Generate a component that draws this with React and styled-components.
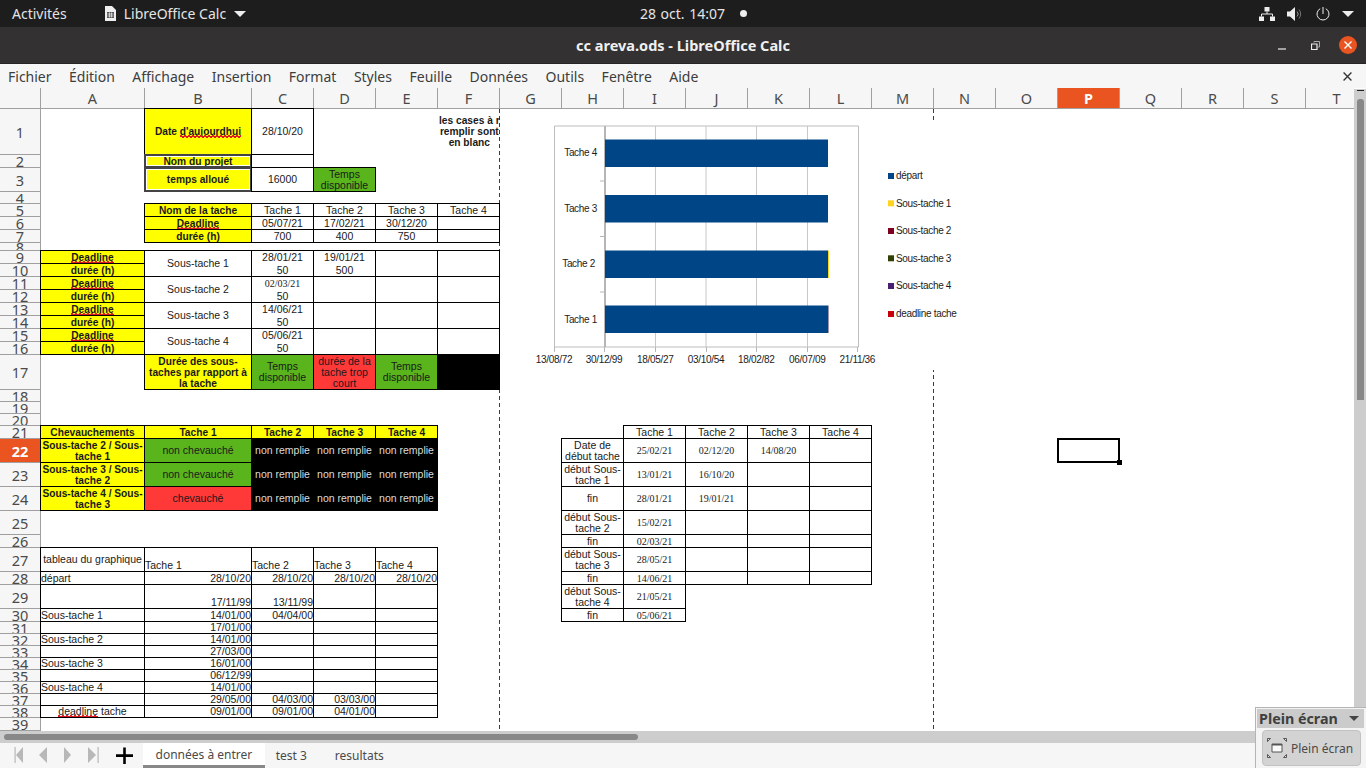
import React from 'react';
import styled, { createGlobalStyle, css } from 'styled-components';

const GlobalStyle = createGlobalStyle`
  * { box-sizing: border-box; }
  html, body { margin: 0; padding: 0; background: #fff; }
  body { font-family: "Noto Sans", sans-serif; }
`;

const LETTERS = 'ABCDEFGHIJKLMNOPQRST'.split('');
const ROW_HEIGHTS = [
  46, 13, 24, 12, 13, 13, 13, 8, 13, 13, 13, 13, 13, 13, 13, 13, 35, 12, 12, 12,
  13, 24, 24, 24, 24, 13, 24, 13, 24, 13, 12, 12, 12, 12, 12, 12, 12, 12, 13,
];
const colIndex = (l) => LETTERS.indexOf(l) + 2;

const Window = styled.div`
  position: relative;
  width: 1366px;
  height: 768px;
  display: flex;
  flex-direction: column;
  overflow: hidden;
  background: #fff;
`;

/* ---- gnome top bar ---- */
const TopBar = styled.header`
  height: 27px;
  flex: none;
  display: grid;
  grid-template-columns: 1fr auto 1fr;
  align-items: center;
  background: #1d1d1d;
  color: #e4e4e4;
  font-size: 14px;
  padding: 0 12px;
`;
const TopLeft = styled.div`
  display: flex;
  align-items: center;
`;
const AppMenu = styled.div`
  display: flex;
  align-items: center;
  gap: 8px;
  margin-left: 37px;
`;
const Clock = styled.div`
  display: flex;
  align-items: center;
  gap: 15px;
  word-spacing: 1px;
  margin-left: 21px;
`;
const Dot = styled.span`
  width: 7px;
  height: 7px;
  border-radius: 50%;
  background: #eee;
`;
const Tray = styled.div`
  display: flex;
  align-items: center;
  justify-content: flex-end;
  gap: 12.5px;
`;

/* ---- title bar ---- */
const TitleBar = styled.div`
  height: 37px;
  flex: none;
  display: flex;
  align-items: center;
  justify-content: center;
  position: relative;
  background: #333132;
  border-bottom: 1px solid #262626;
  color: #f0f0f0;
  font-size: 14.5px;
  font-weight: 700;
`;
const WindowButtons = styled.div`
  position: absolute;
  right: 9px;
  top: 9px;
  display: flex;
  align-items: center;
  gap: 15px;
`;
const WinBtn = styled.span`
  width: 18px;
  height: 18px;
  display: flex;
  align-items: center;
  justify-content: center;
`;
const CloseBtn = styled(WinBtn)`
  border-radius: 50%;
  background: #e95420;
`;

/* ---- menu bar ---- */
const MenuBar = styled.nav`
  height: 24px;
  flex: none;
  display: flex;
  align-items: center;
  gap: 17.5px;
  padding: 0 14px 0 8px;
  background: #f6f6f6;
  color: #3d3d3d;
  font-size: 14px;
`;
const MenuClose = styled.span`
  margin-left: auto;
  display: flex;
`;

/* ---- sheet ---- */
const Workspace = styled.div`
  flex: 1;
  min-height: 0;
  display: flex;
`;
const SheetView = styled.div`
  position: relative;
  flex: 1;
  min-width: 0;
  overflow: hidden;
`;
const Sheet = styled.div`
  display: grid;
  grid-template-columns: 41px 104px 107px repeat(18, 62px);
  grid-template-rows: 21px ${ROW_HEIGHTS.map((h) => `${h}px`).join(' ')};
`;
const Corner = styled.div`
  grid-column: 1;
  grid-row: 1;
  background: #f6f6f6;
  border-right: 1px solid #a0a0a0;
  border-bottom: 1px solid #a0a0a0;
`;
const headActive = css`
  background: #e95420;
  color: #fff;
  font-weight: 700;
`;
const ColHead = styled.div`
  grid-column: ${(p) => colIndex(p.$col)};
  grid-row: 1;
  display: flex;
  align-items: center;
  justify-content: center;
  background: #f6f6f6;
  color: #4a4a4a;
  font-size: 14.5px;
  border-right: 1px solid #a0a0a0;
  border-bottom: 1px solid #a0a0a0;
  ${(p) => p.$active && headActive}
`;
const RowHead = styled.div`
  grid-column: 1;
  grid-row: ${(p) => p.$row + 1};
  display: flex;
  align-items: center;
  justify-content: center;
  overflow: hidden;
  background: #f6f6f6;
  color: #4a4a4a;
  font-size: 14.5px;
  line-height: 12px;
  border-right: 1px solid #a0a0a0;
  border-bottom: 1px solid #a0a0a0;
  ${(p) => p.$active && headActive}
`;
const PageBreak = styled.div`
  grid-column: ${(p) => colIndex(p.$col)};
  grid-row: 2 / -1;
  width: 1px;
  margin-left: -1px;
  background: repeating-linear-gradient(#3c3c3c 0 4px, transparent 4px 7px);
`;

const Cell = styled.div`
  grid-column: ${(p) => colIndex(p.$col)} / span ${(p) => p.$cols || 1};
  grid-row: ${(p) => p.$row + 1} / span ${(p) => p.$rows || 1};
  display: flex;
  align-items: ${(p) => (p.$valign === 'bottom' ? 'flex-end' : 'center')};
  justify-content: ${(p) =>
    p.$align === 'left' ? 'flex-start' : p.$align === 'right' ? 'flex-end' : 'center'};
  text-align: ${(p) => p.$align || 'center'};
  overflow: hidden;
  white-space: nowrap;
  font-family: ${(p) => (p.$serif ? '"Liberation Serif"' : '"Liberation Sans"')}, sans-serif;
  font-size: ${(p) => (p.$serif ? 10 : 10.5)}px;
  line-height: ${(p) => p.$lh || 11}px;
  color: #1a1a1a;
`;
const Box = styled(Cell)`
  border: 1px solid #000;
  margin: -1px 0 0 -1px;
`;
const Yellow = styled(Box)`
  background: #ffff00;
  font-size: 10.2px;
  font-weight: 700;
`;
const Framed = styled(Yellow)`
  border: 2px solid #444;
  box-shadow: inset 0 0 0 1px #fff;
`;
const Green = styled(Box)`
  background: #5ab41c;
`;
const Red = styled(Box)`
  background: #ff3838;
`;
const Black = styled(Box)`
  background: #000;
  color: #dcdcdc;
`;
const Note = styled(Cell)`
  font-size: 10.2px;
  font-weight: 700;
  justify-content: flex-start;
  align-items: flex-start;
  padding: 6px 0 0 1px;
  text-align: center;
`;
const Selected = styled(Cell)`
  position: relative;
  overflow: visible;
  border: 2px solid #000;
  margin: -1px 0 0 -1px;
`;
const Handle = styled.span`
  position: absolute;
  right: -4px;
  bottom: -4px;
  width: 5px;
  height: 5px;
  background: #000;
`;
/* red squiggle of the spell checker, sits just under the baseline */
const Spell = styled.span`
  position: relative;
  &::after {
    content: '';
    position: absolute;
    left: 0;
    right: 0;
    bottom: -1px;
    height: 3px;
    background-image:
      linear-gradient(45deg, transparent 38%, #e01b24 38%, #e01b24 62%, transparent 62%),
      linear-gradient(-45deg, transparent 38%, #e01b24 38%, #e01b24 62%, transparent 62%);
    background-size: 4px 3px;
    background-position: 0 0, 2px 0;
  }
`;
const SerifLine = styled.span`
  font-family: "Liberation Serif", serif;
  font-size: 10px;
`;
const ChartFloat = styled.svg`
  position: absolute;
  left: 530px;
  top: 32px;
  background: #fff;
`;

/* ---- scrollbars ---- */
const VScroll = styled.div`
  position: relative;
  width: 12px;
  flex: none;
  margin-top: 1px;
  background: #cdcdcd;
`;
const VEnd = styled.span`
  position: absolute;
  left: 3px;
  top: 1px;
  width: 7px;
  height: 1px;
  background: #222;
`;
const VThumb = styled.span`
  position: absolute;
  left: 3px;
  top: 10px;
  width: 7px;
  height: 301px;
  border-radius: 3px 3px 0 0;
  background: #888;
`;
const HScroll = styled.div`
  height: 12px;
  flex: none;
  padding: 3px 0 3px 4px;
  background: #cdcdcd;
`;
const HThumb = styled.div`
  width: 634px;
  height: 6px;
  border-radius: 3px;
  background: #888;
`;

/* ---- sheet tabs ---- */
const TabBar = styled.div`
  height: 25px;
  flex: none;
  display: flex;
  align-items: stretch;
  background: #f6f6f6;
  color: #4a4a4a;
  font-size: 12px;
`;
const TabNav = styled.div`
  width: 143px;
  flex: none;
  display: flex;
  align-items: center;
`;
const Tab = styled.div`
  display: flex;
  align-items: center;
  padding: 0 11px;
  margin-right: 6px;
  ${(p) =>
    p.$active &&
    css`
      background: #fff;
      border-bottom: 3px solid #888;
      padding: 1px 12.5px 0;
      margin-right: 0;
    `}
`;

/* ---- floating toolbar ---- */
const FloatPanel = styled.div`
  position: absolute;
  right: 0;
  bottom: 0;
  width: 111px;
  height: 61px;
  padding: 1px 2px 2px 1px;
  background: #f4f4f4;
  border: 1px solid #b4b4b4;
  border-right: 0;
  border-bottom: 0;
`;
const FloatHead = styled.div`
  height: 19px;
  display: flex;
  align-items: center;
  justify-content: space-between;
  padding: 0 5px 0 2px;
  background: #cbcbcb;
  color: #3f3f3f;
  font-size: 14.3px;
  font-weight: 700;
  white-space: nowrap;
`;
const FloatButton = styled.div`
  height: 36px;
  margin: 2px 0 0 5px;
  width: 99px;
  display: flex;
  align-items: center;
  gap: 4px;
  padding-left: 4px;
  background: #d3d3d3;
  border: 1px solid #c2c2c2;
  border-radius: 4px;
  color: #4a4a4a;
  font-size: 12px;
  white-space: nowrap;
`;

const DocIcon = () => (
  <svg width="12" height="15" viewBox="0 0 12 15">
    <path d="M1 0h7l4 4v11H1z" fill="#eee" />
    <path d="M3 6h7v6H3z" fill="#555" />
    <path d="M3.5 8h6M3.5 10h6M5.5 6.5v5M7.5 6.5v5" stroke="#eee" strokeWidth=".7" />
  </svg>
);
const Caret = ({ w = 12, h = 6, color = '#eee' }) => (
  <svg width={w} height={h} viewBox="0 0 11 6" preserveAspectRatio="none">
    <path d="M0 0h11L5.5 6z" fill={color} />
  </svg>
);
const NetworkIcon = () => (
  <svg width="16" height="14" viewBox="0 0 16 14">
    <path d="M5.5 0h5v4.500h-5zM0 9.5h5V14H0zM11 9.5h5V14h-5z" fill="#eee" />
    <path d="M8 4.5v2.5M2.5 9.5V7h11v2.5" stroke="#eee" fill="none" />
  </svg>
);
const VolumeIcon = () => (
  <svg width="16" height="14" viewBox="0 0 16 14">
    <path d="M0 4.5h3L8 0v14l-5-4.500H0z" fill="#eee" />
    <path d="M10 4.5a3.5 3.5 0 0 1 0 5" stroke="#999" fill="none" />
    <path d="M12 2.5a7 7 0 0 1 0 9" stroke="#777" fill="none" />
  </svg>
);
const PowerIcon = () => (
  <svg width="14" height="14" viewBox="0 0 14 14">
    <path d="M4.2 1.7a6 6 0 1 0 5.6 0" stroke="#eee" fill="none" />
    <path d="M7 0v7" stroke="#eee" />
  </svg>
);
const MinIcon = () => (
  <svg width="9" height="9" viewBox="0 0 9 9">
    <path d="M0 8h8" stroke="#eee" strokeWidth="1.2" />
  </svg>
);
const RestoreIcon = () => (
  <svg width="9" height="9" viewBox="0 0 9 9">
    <path d="M.5 3h5.5v5.5H.5z" stroke="#eee" fill="none" strokeWidth="1.2" />
    <path d="M3 1.5V.5h5.5V6H7" stroke="#aaa" fill="none" />
  </svg>
);
const CrossIcon = ({ size = 8, color = '#fff', width = 1.4 }) => (
  <svg width={size} height={size} viewBox="0 0 8 8">
    <path d="M.5.5l7 7M7.5.5l-7 7" stroke={color} strokeWidth={width} />
  </svg>
);
const TabArrows = () => (
  <svg width="143" height="25" viewBox="0 0 143 25">
    <g fill="#b8b8b8">
      <path d="M14.5 4h1.2v16h-1.2zM23 4v16l-7-8z" />
      <path d="M47 4v16l-8-8z" />
      <path d="M64 4v16l7-8z" />
      <path d="M88 4v16l8-8zM97.5 4h1.2v16h-1.2z" />
    </g>
    <path d="M116 12.6h17M124.5 4.5v16.5" stroke="#000" strokeWidth="2.6" />
  </svg>
);
const FullScreenIcon = () => (
  <svg width="20" height="20" viewBox="0 0 20 20">
    <path d="M5 6h10v8H5z" fill="#fafafa" stroke="#555" />
    <path d="M5 6h10v1.5H5z" fill="#555" />
    <g stroke="#555" fill="#eee">
      <path d="M.5 3.5V.5h3zM16.5.5h3v3zM.5 16.5v3h3zM19.5 16.5v3h-3z" />
    </g>
  </svg>
);

const BARS = [139.5, 195, 250.5, 305.5];
const GRID_X = [655.5, 706, 756.5, 807.5];
const DATE_TICKS = [
  [554, '13/08/72'], [604, '30/12/99'], [655.3, '18/05/27'], [706, '03/10/54'],
  [756.3, '18/02/82'], [807.3, '06/07/09'], [857.3, '21/11/36'],
];
const LEGEND = [
  [176, '#004586', 'départ'], [203.3, '#ffd320', 'Sous-tache 1'], [231, '#7e0021', 'Sous-tache 2'],
  [258.3, '#314004', 'Sous-tache 3'], [286, '#4b1f6f', 'Sous-tache 4'], [314, '#c5000b', 'deadline tache'],
];
const Y_LABELS = [
  [597, 155.5, 'Tache 4'], [597, 211.5, 'Tache 3'], [595, 266.5, 'Tache 2'], [597, 322.5, 'Tache 1'],
];

const Chart = () => (
  <ChartFloat width="436" height="250" viewBox="530 120 436 250">
    <g fontFamily="Liberation Sans, sans-serif" fontSize="10" letterSpacing="-0.32" fill="#1c1c1c">
      <path d="M554.5 126H858.5V347H554.5z" fill="none" stroke="#bdbdbd" />
      {GRID_X.map((x) => (
        <path key={x} d={`M${x} 126V347`} stroke="#c8c8c8" />
      ))}
      <path d="M605 126V347" stroke="#b6b6b6" strokeWidth="2" />
      {BARS.map((y) => (
        <rect key={y} x="605" y={y} width="223" height="27.5" fill="#004586" />
      ))}
      <path d="M828.5 250.5v27.5" stroke="#ffd320" />
      <path d="M828.5 305.5v27.5" stroke="#a294ac" />
      <path d="M600 181h5M600 236.5h5M600 292h5" stroke="#b6b6b6" />
      {DATE_TICKS.map(([x, label]) => (
        <g key={label}>
          <path d={`M${Math.round(x) + 0.5} 347v5`} stroke="#b6b6b6" />
          <text x={x} y="362.5" textAnchor="middle">{label}</text>
        </g>
      ))}
      {Y_LABELS.map(([x, y, label]) => (
        <text key={label} x={x} y={y} textAnchor="end">{label}</text>
      ))}
      {LEGEND.map(([y, color, label]) => (
        <g key={label}>
          <rect x="888" y={y - 3} width="6" height="6" fill={color} />
          <text x="896" y={y + 3.3}>{label}</text>
        </g>
      ))}
    </g>
  </ChartFloat>
);

const TACHES = ['Tache 1', 'Tache 2', 'Tache 3', 'Tache 4'];
const SUB_ROWS = [
  { row: 9, name: 'Sous-tache 1', c: <>28/01/21<br />50</>, d: <>19/01/21<br />500</> },
  { row: 11, name: 'Sous-tache 2', c: <span><SerifLine>02/03/21</SerifLine><br />50</span> },
  { row: 13, name: 'Sous-tache 3', c: <>14/06/21<br />50</> },
  { row: 15, name: 'Sous-tache 4', c: <>05/06/21<br />50</> },
];
const OVERLAPS = [
  { row: 22, label: <>Sous-tache 2 / Sous-<br />tache 1</>, Kind: Green, text: 'non chevauché' },
  { row: 23, label: <>Sous-tache 3 / Sous-<br />tache 2</>, Kind: Green, text: 'non chevauché' },
  { row: 24, label: <>Sous-tache 4 / Sous-<br />tache 3</>, Kind: Red, text: 'chevauché' },
];
const GRAPH_ROWS = [
  [28, 'départ', '28/10/20', '28/10/20', '28/10/20', '28/10/20'],
  [29, '', '17/11/99', '13/11/99', '', ''],
  [30, 'Sous-tache 1', '14/01/00', '04/04/00', '', ''],
  [31, '', '17/01/00', '', '', ''],
  [32, 'Sous-tache 2', '14/01/00', '', '', ''],
  [33, '', '27/03/00', '', '', ''],
  [34, 'Sous-tache 3', '16/01/00', '', '', ''],
  [35, '', '06/12/99', '', '', ''],
  [36, 'Sous-tache 4', '14/01/00', '', '', ''],
  [37, '', '29/05/00', '04/03/00', '03/03/00', ''],
];
const DATES_TABLE = [
  [22, <>Date de<br />début tache</>, '25/02/21', '02/12/20', '14/08/20', ''],
  [23, <>début Sous-<br />tache 1</>, '13/01/21', '16/10/20', '', ''],
  [24, 'fin', '28/01/21', '19/01/21', '', ''],
  [25, <>début Sous-<br />tache 2</>, '15/02/21', '', '', ''],
  [26, 'fin', '02/03/21', '', '', ''],
  [27, <>début Sous-<br />tache 3</>, '28/05/21', '', '', ''],
  [28, 'fin', '14/06/21', '', '', ''],
];

const TopSection = () => (
  <>
    <Yellow $col="B" $row={1}><span>Date <Spell>d'aujourdhui</Spell></span></Yellow>
    <Box $col="C" $row={1}>28/10/20</Box>
    <Note $col="F" $row={1}>les cases à r<br />remplir sont<br />en blanc</Note>
    <Framed $col="B" $row={2}>Nom du projet</Framed>
    <Box $col="C" $row={2} />
    <Framed $col="B" $row={3}>temps alloué</Framed>
    <Box $col="C" $row={3}>16000</Box>
    <Green $col="D" $row={3}>Temps<br />disponible</Green>

    <Yellow $col="B" $row={5}>Nom de la tache</Yellow>
    {TACHES.map((t, i) => (
      <Box key={t} $col={'CDEF'[i]} $row={5}>{t}</Box>
    ))}
    <Yellow $col="B" $row={6}><Spell>Deadline</Spell></Yellow>
    <Box $col="C" $row={6}>05/07/21</Box>
    <Box $col="D" $row={6}>17/02/21</Box>
    <Box $col="E" $row={6}>30/12/20</Box>
    <Box $col="F" $row={6} />
    <Yellow $col="B" $row={7}>durée (h)</Yellow>
    <Box $col="C" $row={7}>700</Box>
    <Box $col="D" $row={7}>400</Box>
    <Box $col="E" $row={7}>750</Box>
    <Box $col="F" $row={7} />

    {SUB_ROWS.map(({ row, name, c, d }) => (
      <React.Fragment key={row}>
        <Yellow $col="A" $row={row}><Spell>Deadline</Spell></Yellow>
        <Yellow $col="A" $row={row + 1}>durée (h)</Yellow>
        <Box $col="B" $row={row} $rows={2}>{name}</Box>
        <Box $col="C" $row={row} $rows={2} $lh={13}>{c}</Box>
        <Box $col="D" $row={row} $rows={2} $lh={13}>{d}</Box>
        <Box $col="E" $row={row} $rows={2} />
        <Box $col="F" $row={row} $rows={2} />
      </React.Fragment>
    ))}

    <Yellow $col="B" $row={17}>Durée des sous-<br />taches par rapport à<br />la tache</Yellow>
    <Green $col="C" $row={17}>Temps<br />disponible</Green>
    <Red $col="D" $row={17}>durée de la<br />tache trop<br />court</Red>
    <Green $col="E" $row={17}>Temps<br />disponible</Green>
    <Black $col="F" $row={17} />
  </>
);

const OverlapSection = () => (
  <>
    <Yellow $col="A" $row={21}>Chevauchements</Yellow>
    {TACHES.map((t, i) => (
      <Yellow key={t} $col={'BCDE'[i]} $row={21}>{t}</Yellow>
    ))}
    {OVERLAPS.map(({ row, label, Kind, text }) => (
      <React.Fragment key={row}>
        <Yellow $col="A" $row={row}>{label}</Yellow>
        <Kind $col="B" $row={row}>{text}</Kind>
        <Black $col="C" $row={row}>non remplie</Black>
        <Black $col="D" $row={row}>non remplie</Black>
        <Black $col="E" $row={row}>non remplie</Black>
      </React.Fragment>
    ))}
  </>
);

const GraphSection = () => (
  <>
    <Box $col="A" $row={27}>tableau du graphique</Box>
    {TACHES.map((t, i) => (
      <Box key={t} $col={'BCDE'[i]} $row={27} $align="left" $valign="bottom">{t}</Box>
    ))}
    {GRAPH_ROWS.map(([row, label, ...dates]) => (
      <React.Fragment key={row}>
        <Box $col="A" $row={row} $align="left">{label}</Box>
        {dates.map((d, i) => (
          <Box key={i} $col={'BCDE'[i]} $row={row} $align="right" $valign={row === 29 ? 'bottom' : undefined}>{d}</Box>
        ))}
      </React.Fragment>
    ))}
    <Box $col="A" $row={38}><span><Spell>deadline</Spell> tache</span></Box>
    <Box $col="B" $row={38} $align="right">09/01/00</Box>
    <Box $col="C" $row={38} $align="right">09/01/00</Box>
    <Box $col="D" $row={38} $align="right">04/01/00</Box>
    <Box $col="E" $row={38} />
  </>
);

const DatesSection = () => (
  <>
    {TACHES.map((t, i) => (
      <Box key={t} $col={'IJKL'[i]} $row={21}>{t}</Box>
    ))}
    {DATES_TABLE.map(([row, label, ...dates]) => (
      <React.Fragment key={row}>
        <Box $col="H" $row={row}>{label}</Box>
        {dates.map((d, i) => (
          <Box key={i} $col={'IJKL'[i]} $row={row} $serif>{d}</Box>
        ))}
      </React.Fragment>
    ))}
    <Box $col="H" $row={29}>début Sous-<br />tache 4</Box>
    <Box $col="I" $row={29} $serif>21/05/21</Box>
    <Box $col="H" $row={30}>fin</Box>
    <Box $col="I" $row={30} $serif>05/06/21</Box>
  </>
);

const MENUS = ['Fichier', 'Édition', 'Affichage', 'Insertion', 'Format', 'Styles', 'Feuille', 'Données', 'Outils', 'Fenêtre', 'Aide'];

export default function App() {
  return (
    <Window>
      <GlobalStyle />
      <TopBar>
        <TopLeft>
          Activités
          <AppMenu>
            <DocIcon />
            LibreOffice Calc
            <Caret />
          </AppMenu>
        </TopLeft>
        <Clock>28 oct.  14:07<Dot /></Clock>
        <Tray>
          <NetworkIcon />
          <VolumeIcon />
          <PowerIcon />
          <Caret />
        </Tray>
      </TopBar>
      <TitleBar>
        cc areva.ods - LibreOffice Calc
        <WindowButtons>
          <WinBtn><MinIcon /></WinBtn>
          <WinBtn><RestoreIcon /></WinBtn>
          <CloseBtn><CrossIcon /></CloseBtn>
        </WindowButtons>
      </TitleBar>
      <MenuBar>
        {MENUS.map((m) => <span key={m}>{m}</span>)}
        <MenuClose><CrossIcon size={9} color="#333" width={1.2} /></MenuClose>
      </MenuBar>
      <Workspace>
        <SheetView>
          <Sheet>
            <Corner />
            {LETTERS.map((l) => (
              <ColHead key={l} $col={l} $active={l === 'P'}>{l}</ColHead>
            ))}
            {ROW_HEIGHTS.map((_, i) => (
              <RowHead key={i} $row={i + 1} $active={i + 1 === 22}>{i + 1}</RowHead>
            ))}
            <PageBreak $col="G" />
            <PageBreak $col="N" />
            <TopSection />
            <OverlapSection />
            <GraphSection />
            <DatesSection />
            <Selected $col="P" $row={22}><Handle /></Selected>
          </Sheet>
          <Chart />
        </SheetView>
        <VScroll>
          <VEnd />
          <VThumb />
        </VScroll>
      </Workspace>
      <HScroll><HThumb /></HScroll>
      <TabBar>
        <TabNav><TabArrows /></TabNav>
        <Tab $active>données à entrer</Tab>
        <Tab>test 3</Tab>
        <Tab>resultats</Tab>
      </TabBar>
      <FloatPanel>
        <FloatHead>
          Plein écran
          <Caret w={10} h={5} color="#444" />
        </FloatHead>
        <FloatButton>
          <FullScreenIcon />
          Plein écran
        </FloatButton>
      </FloatPanel>
    </Window>
  );
}
